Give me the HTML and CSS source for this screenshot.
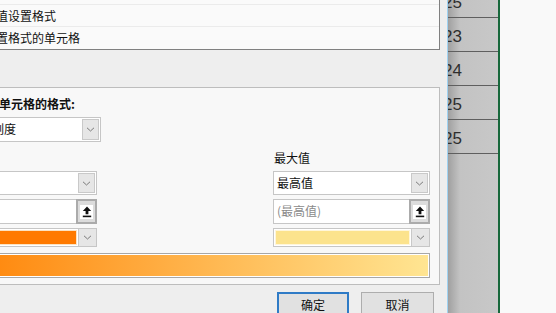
FILE: index.html
```html
<!DOCTYPE html>
<html lang="zh-CN">
<head>
  <meta charset="UTF-8">
  <title>编辑格式规则</title>
  <link rel="stylesheet" href="styles.css">
</head>
<body>
  <div class="screen">
    <div class="dialog">
      <ul class="rule-list">
        <li>仅对高于或低于平均值的数值设置格式</li>
        <li>仅对唯一值或重复值设置格式</li>
        <li>使用公式确定要设置格式的单元格</li>
      </ul>

      <div class="panel">
        <div class="panel-title">基于各自值设置所有单元格的格式:</div>

        <div class="combo style-combo">
          <span class="value">双色刻度</span>
          <span class="arrow"><svg width="9" height="5" viewBox="0 0 9 5"><polyline points="1,0.8 4.5,4 8,0.8" fill="none" stroke="#7a7a7a" stroke-width="1"/></svg></span>
        </div>

        <div class="cols">
          <div class="col-label">最小值</div>
          <div class="col-label">最大值</div>

          <div class="combo">
            <span class="value">最低值</span>
            <span class="arrow"><svg width="9" height="5" viewBox="0 0 9 5"><polyline points="1,0.8 4.5,4 8,0.8" fill="none" stroke="#7a7a7a" stroke-width="1"/></svg></span>
          </div>
          <div class="combo">
            <span class="value">最高值</span>
            <span class="arrow"><svg width="9" height="5" viewBox="0 0 9 5"><polyline points="1,0.8 4.5,4 8,0.8" fill="none" stroke="#7a7a7a" stroke-width="1"/></svg></span>
          </div>

          <div class="field">
            <span class="value placeholder">(最低值)</span>
            <span class="pick"><span class="pick-face"><svg width="10" height="12" viewBox="0 0 10 12"><polygon points="5,0.5 0.8,5 3.6,5 3.6,8.2 6.4,8.2 6.4,5 9.2,5" fill="#111"/><rect x="0.8" y="9.6" width="8.4" height="1.6" fill="#111"/></svg></span></span>
          </div>
          <div class="field">
            <span class="value placeholder">(最高值)</span>
            <span class="pick"><span class="pick-face"><svg width="10" height="12" viewBox="0 0 10 12"><polygon points="5,0.5 0.8,5 3.6,5 3.6,8.2 6.4,8.2 6.4,5 9.2,5" fill="#111"/><rect x="0.8" y="9.6" width="8.4" height="1.6" fill="#111"/></svg></span></span>
          </div>

          <div class="combo color-combo">
            <span class="swatch swatch-min"></span>
            <span class="arrow"><svg width="9" height="5" viewBox="0 0 9 5"><polyline points="1,0.8 4.5,4 8,0.8" fill="none" stroke="#7a7a7a" stroke-width="1"/></svg></span>
          </div>
          <div class="combo color-combo">
            <span class="swatch swatch-max"></span>
            <span class="arrow"><svg width="9" height="5" viewBox="0 0 9 5"><polyline points="1,0.8 4.5,4 8,0.8" fill="none" stroke="#7a7a7a" stroke-width="1"/></svg></span>
          </div>
        </div>

        <div class="preview"><span></span></div>
      </div>

      <div class="buttons">
        <button class="primary">确定</button>
        <button>取消</button>
      </div>
    </div>

    <div class="sheet">
      <div class="cell">25</div>
      <div class="cell">23</div>
      <div class="cell">24</div>
      <div class="cell">25</div>
      <div class="cell">25</div>
    </div>

    <div class="rest"></div>
  </div>
</body>
</html>
```

FILE: styles.css
```css
body {
  margin: 0;
  width: 556px;
  height: 313px;
  overflow: hidden;
  font-family: "Noto Sans CJK SC", "Noto Sans", sans-serif;
  font-size: 12px;
  color: #111;
  background: #f9f9f9;
}

.screen {
  display: flex;
  height: 313px;
}

/* dialog is cut on the left by the screenshot */
.dialog {
  flex: none;
  width: 560px;
  margin-left: -120px;
  padding-right: 7px;
  background: #eeeeee;
  border-right: 1px solid #9fd2f2;
}

.rule-list {
  list-style: none;
  margin: -18px 0 0;
  padding: 0 0 1px;
  background: #fafafa;
  border: 1px solid #808080;
  border-top: 0;
}

.rule-list li {
  box-sizing: border-box;
  height: 22px;
  padding: 1px 0 0 19px;
  line-height: 20px;
  border-top: 1px solid #ebebeb;
  white-space: nowrap;
}

.panel {
  margin-top: 37px;
  padding: 8px 9px 6px 0;
  background: #f8f8f8;
  border: 1px solid #bdbdbd;
  border-left: 0;
}

.panel-title {
  margin-left: 11px;
  line-height: 16px;
  font-weight: bold;
  white-space: nowrap;
}

.combo, .field {
  display: flex;
  box-sizing: border-box;
  height: 24px;
  background: #fff;
  border: 1px solid #c6c6c6;
}

.value {
  flex: 1;
  padding-left: 3px;
  line-height: 22px;
  white-space: nowrap;
  overflow: hidden;
}

.placeholder { color: #8a8a8a; }

.arrow {
  flex: none;
  box-sizing: border-box;
  width: 17px;
  margin: 1px;
  display: flex;
  align-items: center;
  justify-content: center;
  background: #e6e6e6;
  border: 1px solid #c9c9c9;
}

.style-combo {
  width: 137px;
  height: 25px;
  margin: 5px 0 0 84px;
}

.cols {
  display: grid;
  grid-template-columns: 157px 157px;
  column-gap: 176px;
  row-gap: 4px;
  justify-content: end;
  margin-top: 8px;
}

.col-label {
  line-height: 16px;
  padding-left: 1px;
  margin-bottom: 1px;
}

.field { height: 25px; }

.pick {
  flex: none;
  box-sizing: border-box;
  width: 21px;
  margin: -1px -1px -1px 0;
  display: flex;
  align-items: center;
  justify-content: center;
  background: #dcdcdc;
  border: 2px solid #ababab;
}

.pick-face {
  display: flex;
  align-items: center;
  justify-content: center;
  width: 13px;
  height: 14px;
  background: #fff;
}

.color-combo { height: 19px; }
.color-combo .arrow { width: 18px; margin: 0; border-width: 0 0 0 1px; }

.swatch {
  flex: 1;
  margin: 1px;
  border: 1px solid #fbe3c4;
}

.swatch-min { background: #ff7a00; }
.swatch-max { background: #fce38d; border-color: #fff6da; }

.preview {
  box-sizing: border-box;
  height: 25px;
  margin: 6px 0 0 60px;
  padding: 1px;
  background: #fff;
  border: 1px solid #a7a7a7;
}

.preview span {
  display: block;
  height: 100%;
  background: linear-gradient(to right, #ff7f00, #ffe592);
}

.buttons {
  display: flex;
  justify-content: flex-end;
  gap: 12px;
  margin-top: 7px;
  padding-right: 6px;
}

.buttons button {
  box-sizing: border-box;
  width: 73px;
  height: 25px;
  padding: 0;
  font: inherit;
  color: #111;
  background: #e1e1e1;
  border: 1px solid #adadad;
}

.buttons .primary {
  width: 72px;
  border: 2px solid #2f7bc6;
}

.sheet {
  flex: none;
  width: 50px;
  overflow: hidden;
  background: linear-gradient(to right, #a0a0a0, #c3c3c3 12px, #c8c8c8);
  border-right: 2px solid #17683b;
}

.cell {
  box-sizing: border-box;
  height: 34px;
  line-height: 38px;
  overflow: hidden;
  text-indent: -5px;
  font-family: "Liberation Sans", sans-serif;
  font-size: 17px;
  color: #2e2e2e;
  border-bottom: 1px solid #5f5f5f;
}

.cell:first-child { margin-top: -16px; }

.rest {
  flex: 1;
  background: #f9f9f9;
}
```
